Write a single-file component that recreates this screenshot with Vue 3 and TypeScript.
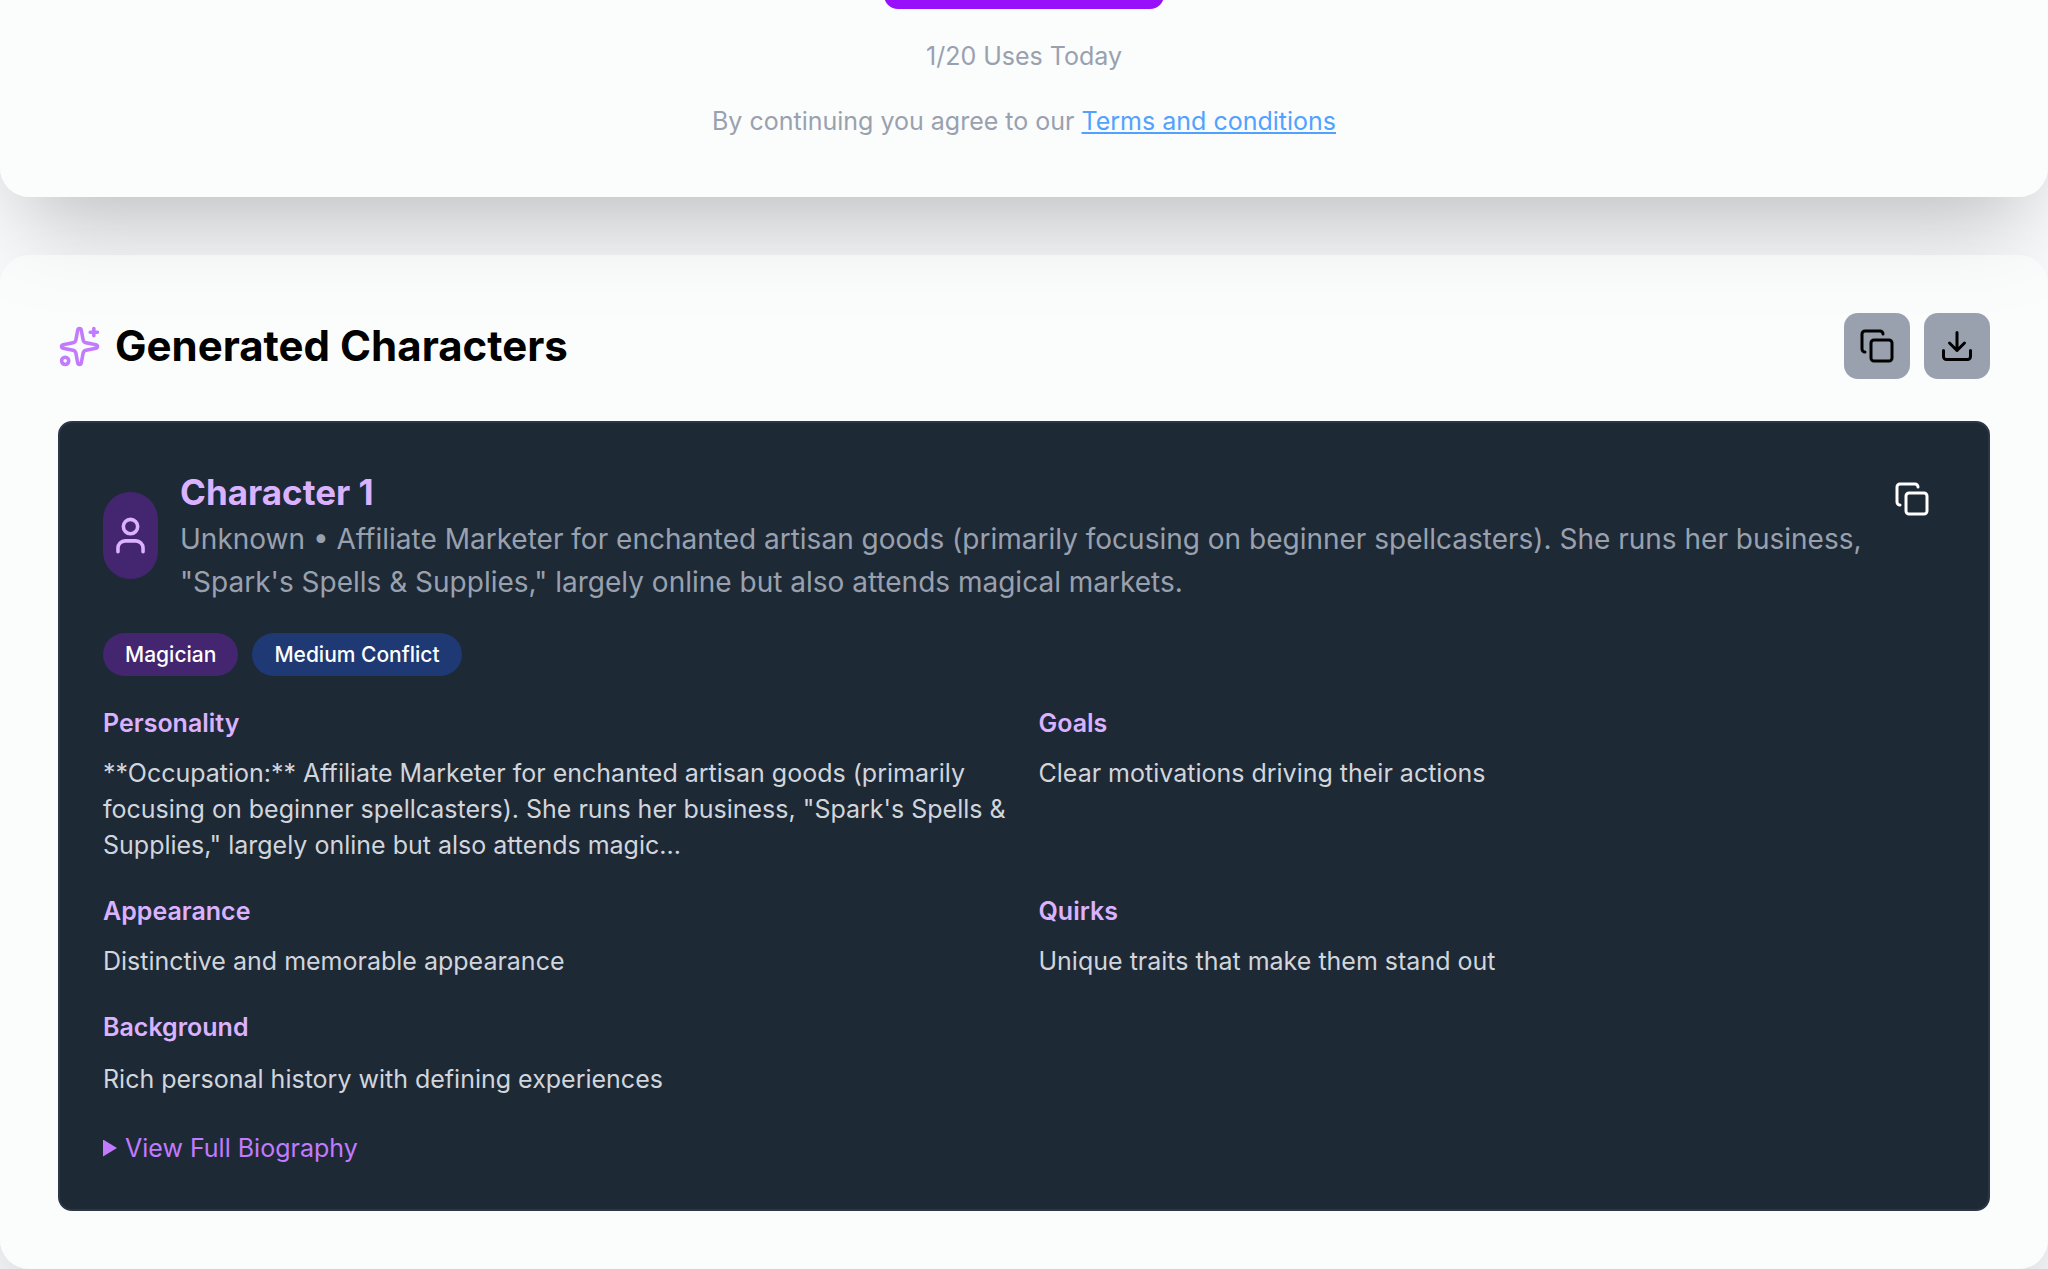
<script setup lang="ts">
interface Trait {
  title: string
  text: string
}

const tags: { label: string; tone: string }[] = [
  { label: 'Magician', tone: 'purple' },
  { label: 'Medium Conflict', tone: 'blue' },
]

const traits: Trait[] = [
  {
    title: 'Personality',
    text: '**Occupation:** Affiliate Marketer for enchanted artisan goods (primarily focusing on beginner spellcasters). She runs her business, "Spark\'s Spells & Supplies," largely online but also attends magic...',
  },
  { title: 'Goals', text: 'Clear motivations driving their actions' },
  { title: 'Appearance', text: 'Distinctive and memorable appearance' },
  { title: 'Quirks', text: 'Unique traits that make them stand out' },
]
</script>

<template>
  <main class="page">
    <section class="panel form-panel">
      <button class="generate" type="button" aria-label="Generate"></button>
      <p class="note">1/20 Uses Today</p>
      <p class="note">By continuing you agree to our <a href="#">Terms and conditions</a></p>
    </section>

    <section class="panel results">
      <header class="results-head">
        <h2>
          <svg class="icon-lg" viewBox="0 0 24 24">
            <path d="M11.017 2.814a1 1 0 0 1 1.966 0l1.051 5.558a2 2 0 0 0 1.594 1.594l5.558 1.051a1 1 0 0 1 0 1.966l-5.558 1.051a2 2 0 0 0-1.594 1.594l-1.051 5.558a1 1 0 0 1-1.966 0l-1.051-5.558a2 2 0 0 0-1.594-1.594l-5.558-1.051a1 1 0 0 1 0-1.966l5.558-1.051a2 2 0 0 0 1.594-1.594z" />
            <path d="M20 2v4M22 4h-4" />
            <circle cx="4" cy="20" r="2" />
          </svg>
          Generated Characters
        </h2>
        <div class="actions">
          <button class="icon-button filled" type="button" aria-label="Copy all">
            <svg class="icon" viewBox="0 0 24 24">
              <rect x="8" y="8" width="14" height="14" rx="2" />
              <path d="M4 16c-1.1 0-2-.9-2-2V4c0-1.1.9-2 2-2h10c1.1 0 2 .9 2 2" />
            </svg>
          </button>
          <button class="icon-button filled" type="button" aria-label="Download">
            <svg class="icon" viewBox="0 0 24 24">
              <path d="M21 15v4a2 2 0 0 1-2 2H5a2 2 0 0 1-2-2v-4" />
              <path d="m7 10 5 5 5-5M12 15V3" />
            </svg>
          </button>
        </div>
      </header>

      <article class="card">
        <div class="identity">
          <div class="avatar">
            <svg class="icon-lg" viewBox="0 0 24 24">
              <path d="M19 21v-2a4 4 0 0 0-4-4H9a4 4 0 0 0-4 4v2" />
              <circle cx="12" cy="7" r="4" />
            </svg>
          </div>
          <div class="who">
            <h3>Character 1</h3>
            <p>Unknown • Affiliate Marketer for enchanted artisan goods (primarily focusing on beginner spellcasters). She runs her business, "Spark's Spells &amp; Supplies," largely online but also attends magical markets.</p>
          </div>
          <button class="icon-button plain" type="button" aria-label="Copy character">
            <svg class="icon" viewBox="0 0 24 24">
              <rect x="8" y="8" width="14" height="14" rx="2" />
              <path d="M4 16c-1.1 0-2-.9-2-2V4c0-1.1.9-2 2-2h10c1.1 0 2 .9 2 2" />
            </svg>
          </button>
        </div>

        <div class="tags">
          <span v-for="tag in tags" :key="tag.label" class="tag" :class="tag.tone">{{ tag.label }}</span>
        </div>

        <div class="traits">
          <section v-for="trait in traits" :key="trait.title">
            <h4>{{ trait.title }}</h4>
            <p>{{ trait.text }}</p>
          </section>
        </div>

        <section class="background">
          <h4>Background</h4>
          <p>Rich personal history with defining experiences</p>
        </section>

        <details>
          <summary>View Full Biography</summary>
        </details>
      </article>
    </section>
  </main>
</template>

<style>
body {
  margin: 0;
  background: #fafbfc;
}
</style>

<style scoped>
.page {
  display: flex;
  flex-direction: column;
  gap: 58px;
  overflow: hidden;
  font-family: Inter, 'Liberation Sans', sans-serif;
  font-size: 25px;
  line-height: 36px;
}

h2,
h3,
h4,
p {
  margin: 0;
}

button {
  border: 0;
  padding: 0;
  cursor: pointer;
}

svg {
  display: block;
  flex: none;
  fill: none;
  stroke: currentColor;
  stroke-width: 2;
  stroke-linecap: round;
  stroke-linejoin: round;
}

.icon {
  width: 36px;
  height: 36px;
}

.icon-lg {
  width: 43px;
  height: 43px;
}

.panel {
  padding: 58px;
  border-radius: 29px;
  background: rgba(251, 253, 252, 0.5);
  box-shadow: 0 45px 90px -22px rgba(0, 0, 0, 0.25);
}

.form-panel {
  display: flex;
  flex-direction: column;
  align-items: center;
  gap: 29px;
  padding-top: 0;
  border-radius: 0 0 29px 29px;
}

.generate {
  width: 280px;
  height: 66px;
  margin-top: -57px;
  border-radius: 14px;
  background: #9810fa;
}

.note {
  color: #99a1af;
}

.note a {
  color: #51a2ff;
}

.results-head {
  display: flex;
  align-items: center;
  justify-content: space-between;
  margin-bottom: 42px;
}

h2 {
  display: flex;
  align-items: center;
  gap: 14px;
  font-size: 42px;
  line-height: 58px;
  font-weight: 700;
  color: #000;
}

h2 svg {
  color: #c27aff;
}

.actions {
  display: flex;
  gap: 14px;
}

.icon-button {
  display: flex;
  flex: none;
  align-items: center;
  justify-content: center;
  width: 66px;
  height: 66px;
  border-radius: 14px;
}

.filled {
  background: #99a1af;
  color: #000;
}

.plain {
  background: transparent;
  color: #fff;
}

.card {
  padding: 43px;
  border: 2px solid #2b3646;
  border-radius: 14px;
  background: #1e2936;
  color: #d1d5dc;
}

.identity {
  display: flex;
  margin-bottom: 29px;
}

.avatar {
  display: flex;
  flex: none;
  align-self: center;
  align-items: center;
  justify-content: center;
  width: 55px;
  height: 87px;
  margin-right: 22px;
  border-radius: 28px;
  background: #442570;
  color: #dab2ff;
}

.who {
  flex: 1;
}

.who p {
  font-size: 28px;
  line-height: 43px;
  color: #99a1af;
}

h3 {
  font-size: 35px;
  line-height: 52px;
  font-weight: 700;
  color: #dab2ff;
}

.tags {
  display: flex;
  gap: 14px;
  margin-bottom: 29px;
}

.tag {
  padding: 0 22px;
  border-radius: 22px;
  font-size: 21px;
  line-height: 43px;
  font-weight: 500;
  color: #fff;
}

.purple {
  background: #442570;
}

.blue {
  background: #1e3973;
}

.traits {
  display: grid;
  grid-template-columns: 1fr 1fr;
  gap: 30px 29px;
  margin-bottom: 30px;
}

h4 {
  margin-bottom: 14px;
  font-size: 25px;
  line-height: 36px;
  font-weight: 600;
  color: #dab2ff;
}

.background p {
  line-height: 41px;
}

details {
  margin-top: 30px;
}

summary {
  display: flex;
  align-items: center;
  gap: 8px;
  color: #c27aff;
  cursor: pointer;
}

summary::before {
  content: '';
  width: 14px;
  height: 17px;
  background: currentColor;
  clip-path: polygon(0 0, 100% 50%, 0 100%);
}
</style>
